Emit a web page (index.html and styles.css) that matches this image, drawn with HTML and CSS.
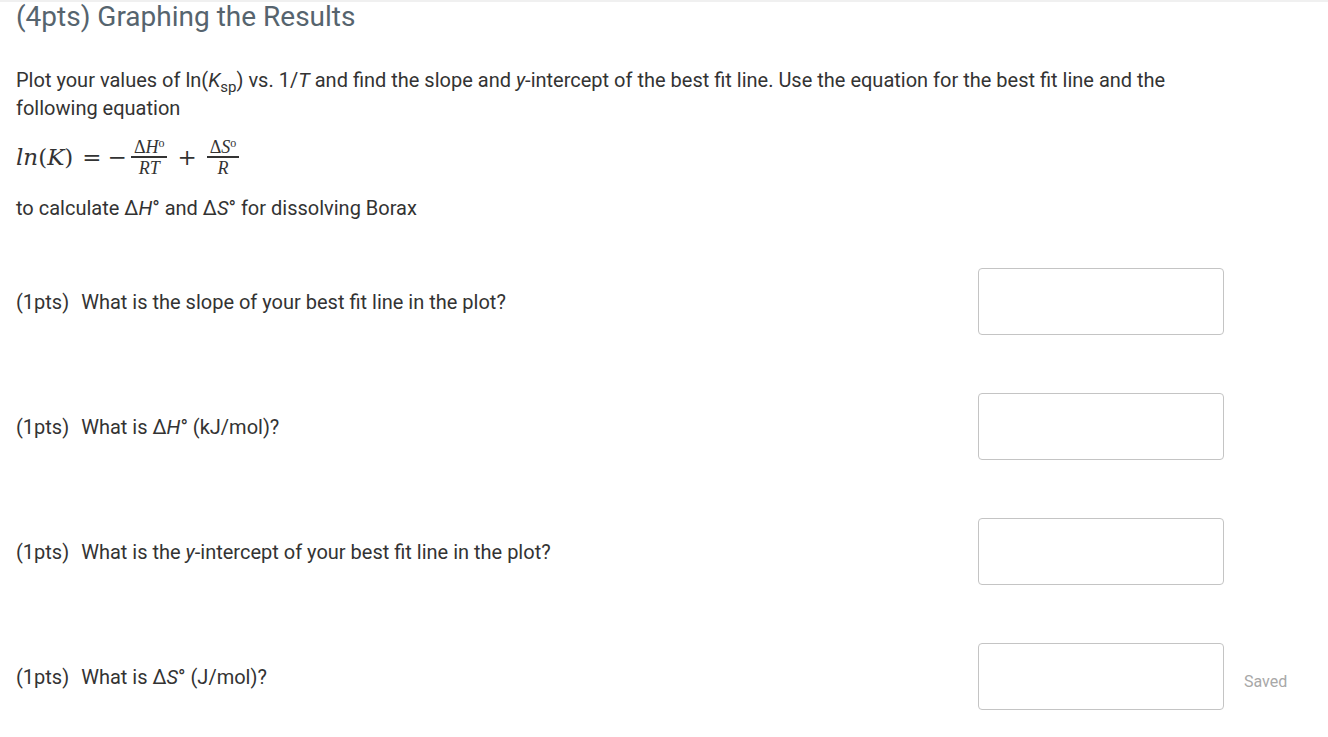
FILE: index.html
```html
<!DOCTYPE html>
<html>
<head>
<meta charset="utf-8">
<link rel="stylesheet" href="styles.css">
</head>
<body>
<div class="topline"></div>
<main class="page">
  <h1 class="title">(4pts) Graphing the Results</h1>
  <p class="text intro">Plot your values of ln(<i>K</i><sub>sp</sub>) vs. 1/<i>T</i> and find the slope and <i>y</i>-intercept of the best fit line. Use the equation for the best fit line and the following equation</p>
  <div class="eq">
    <span class="mi">ln</span><span class="mo">(</span><span class="mi">K</span><span class="mo">)</span>
    <span class="rel">=</span>
    <span class="minus">−</span>
    <span class="frac"><span class="num">Δ<i>H</i><sup>o</sup></span><span class="den"><i>RT</i></span></span>
    <span class="plus">+</span>
    <span class="frac"><span class="num">Δ<i>S</i><sup>o</sup></span><span class="den"><i>R</i></span></span>
  </div>
  <p class="text calc">to calculate Δ<i>H</i>° and Δ<i>S</i>° for dissolving Borax</p>

  <div class="rows">
    <div class="row">
      <div class="label"><span class="pts">(1pts)</span>What is the slope of your best fit line in the plot?</div>
      <div class="answer"></div>
    </div>
    <div class="row">
      <div class="label"><span class="pts">(1pts)</span>What is Δ<i>H</i>° (kJ/mol)?</div>
      <div class="answer"></div>
    </div>
    <div class="row">
      <div class="label"><span class="pts">(1pts)</span>What is the <i>y</i>-intercept of your best fit line in the plot?</div>
      <div class="answer"></div>
    </div>
    <div class="row">
      <div class="label"><span class="pts">(1pts)</span>What is Δ<i>S</i>° (J/mol)?</div>
      <div class="answer"></div>
      <div class="saved">Saved</div>
    </div>
  </div>
</main>
</body>
</html>
```

FILE: styles.css
```css
html, body {
  margin: 0;
  padding: 0;
  background: #ffffff;
}
body {
  font-family: Roboto, "Liberation Sans", Arial, sans-serif;
  color: #333333;
}
.topline {
  height: 2px;
  background: #f0f0f0;
}
.page {
  padding: 0 16px;
}
.title {
  margin: -2px 0 0 0;
  font-size: 28px;
  font-weight: 400;
  line-height: 34px;
  color: #56646e;
}
.text {
  margin: 0;
  font-size: 20px;
  line-height: 28px;
}
.intro {
  margin-top: 32px;
  max-width: 1175px;
}
.intro sub {
  font-size: 15px;
  vertical-align: -5px;
  line-height: 0;
}
.eq {
  display: flex;
  align-items: center;
  height: 42px;
  margin-top: 14px;
  font-family: "DejaVu Serif", "Liberation Serif", serif;
  font-size: 23px;
  color: #333333;
}
.mi {
  font-style: italic;
}
.mo {
  font-style: normal;
}
.rel {
  margin: 0 6px 0 9px;
}
.minus {
  margin-right: 2px;
}
.plus {
  margin: 0 8px;
}
.frac {
  display: inline-flex;
  flex-direction: column;
  align-items: center;
  font-family: "Liberation Serif", serif;
  font-size: 18px;
  line-height: 16px;
  padding: 0 2px;
}
.frac .num {
  border-bottom: 2px solid #333333;
  padding: 0 3px 1px;
}
.frac .num sup {
  font-size: 12px;
  vertical-align: 6px;
  line-height: 0;
}
.frac .den {
  padding-top: 2px;
}
.calc {
  margin-top: 16px;
}
.rows {
  display: flex;
  flex-direction: column;
  gap: 58px;
  margin-top: 46px;
}
.row {
  display: flex;
  align-items: center;
  height: 67px;
}
.label {
  width: 962px;
  font-size: 20px;
  line-height: 28px;
}
.pts {
  margin-right: 12px;
}
.answer {
  width: 244px;
  height: 65px;
  border: 1px solid #c4c4c4;
  border-radius: 4px;
  background: #ffffff;
}
.saved {
  margin-left: 20px;
  margin-top: 10px;
  font-size: 16px;
  color: #a8a8a8;
}
```
